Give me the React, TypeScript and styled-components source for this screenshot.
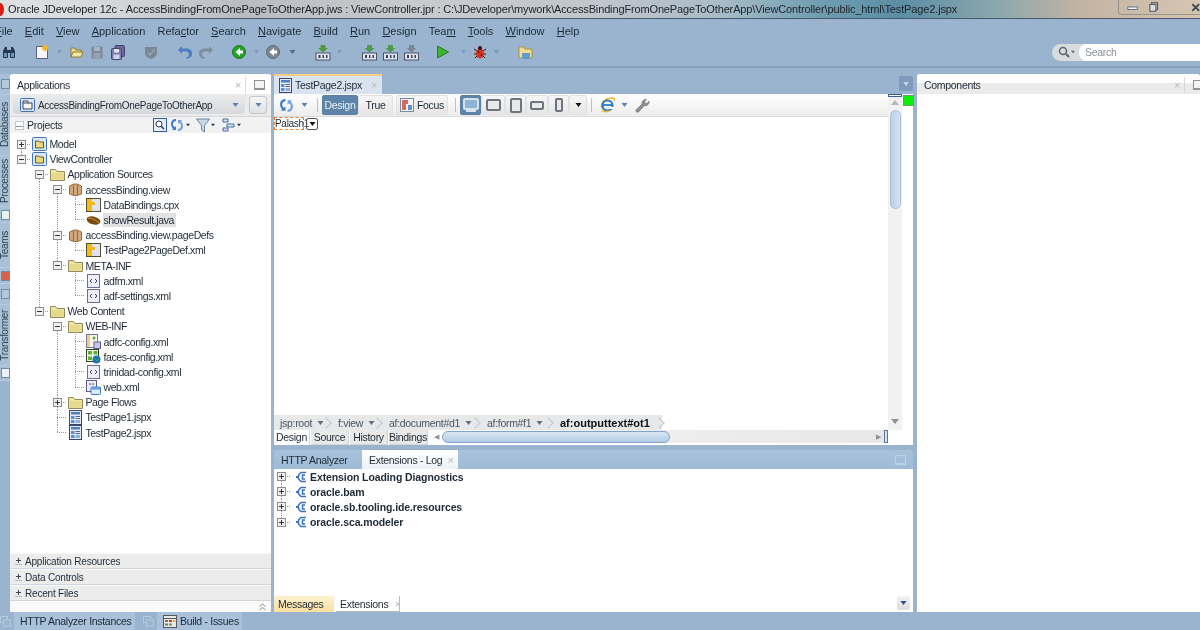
import React from 'react';
import styled, { createGlobalStyle } from 'styled-components';

const BLUE = '#9ab4cf';
const INK = '#1e2a36';

const Global = createGlobalStyle`
  html, body { margin: 0; padding: 0; background: ${BLUE}; }
  body { font-family: "Liberation Sans", Arial, sans-serif; font-size: 10.5px; letter-spacing: -0.3px; color: ${INK}; }
`;

/* ---------- icons ---------- */

const Caret = ({ c = '#5f82ab', w = 6 }: { c?: string; w?: number }) => (
  <svg width={w} height="4" viewBox="0 0 6 4" style={{ flex: 'none' }}><path d="M0 0h6L3 4z" fill={c} /></svg>
);

const Binoculars = () => (
  <svg width="14" height="14" viewBox="0 0 14 14">
    <path d="M1 6l2-4h2v3h4V2h2l2 4v6a1 1 0 0 1-1 1h-3a1 1 0 0 1-1-1V8H6v4a1 1 0 0 1-1 1H2a1 1 0 0 1-1-1z" fill="#26384f" />
    <rect x="2" y="8" width="3" height="4" fill="#6d93c0" /><rect x="9" y="8" width="3" height="4" fill="#6d93c0" />
  </svg>
);
const NewFile = () => (
  <svg width="15" height="16" viewBox="0 0 15 16">
    <path d="M1.500 2.500h8l3 3v9h-11z" fill="#f6f5fb" stroke="#5d5f88" />
    <path d="M10 0l1 2 2-1-1 2 2 1-2 1 1 2-2-1-1 2-1-2-2 1 1-2-2-1 2-1-1-2 2 1z" fill="#f2b62a" />
  </svg>
);
const OpenFolder = () => (
  <svg width="14" height="13" viewBox="0 0 14 13">
    <path d="M1 11V2h4l1 2h5v2" fill="#ecd98a" stroke="#8f7a32" />
    <path d="M1 11l2-5h10l-2 5z" fill="#f5e7a3" stroke="#8f7a32" />
  </svg>
);
const Floppy = ({ c = '#7c8a98', w = 12 }: { c?: string; w?: number }) => (
  <svg width={w} height="13" viewBox="0 0 12 13">
    <rect x=".5" y=".5" width="11" height="12" rx="1" fill={c} />
    <rect x="3" y="1" width="6" height="4" fill="#a9b5c0" /><rect x="2.500" y="7" width="7" height="5" fill="#95a2af" />
  </svg>
);
const SaveAll = () => (
  <svg width="14" height="15" viewBox="0 0 14 15">
    <rect x="4" y=".5" width="9.500" height="11" rx="1" fill="#6b6a9e" stroke="#44446e" />
    <rect x=".5" y="3.500" width="10" height="11" rx="1" fill="#7b7bb0" stroke="#44446e" />
    <rect x="3" y="4" width="5" height="3.500" fill="#e4e4f2" /><rect x="2.500" y="9.500" width="6" height="4.500" fill="#d3d3e8" />
  </svg>
);
const Shield = () => (
  <svg width="14" height="15" viewBox="0 0 14 15">
    <path d="M1 2h12v6c0 3-3 5-6 6-3-1-6-3-6-6z" fill="#7b8794" />
    <path d="M4 8l2 2 5-6" stroke="#98a3ae" strokeWidth="1.500" fill="none" />
  </svg>
);
const Undo = ({ c = '#4a7fc0', flip = false }: { c?: string; flip?: boolean }) => (
  <svg width="15" height="14" viewBox="0 0 15 14" style={flip ? { transform: 'scaleX(-1)' } : undefined}>
    <path d="M5 1L1 5l4 4V6.500h4c2 0 3 1.500 3 3s-1 2.500-3 3v1c4 0 6-2 6-5s-2-5-6-5H5z" fill={c} />
  </svg>
);
const Round = ({ c, d }: { c: string; d: string }) => (
  <svg width="14" height="14" viewBox="0 0 14 14">
    <circle cx="7" cy="7" r="6.500" fill={c} stroke={d} />
    <path d="M8 3v2.500h3v3H8V11L3.500 7z" fill="#fff" />
  </svg>
);
const Deploy = ({ c = '#4f9a3c', w = 15 }: { c?: string; w?: number }) => (
  <svg width={w} height="17" viewBox="0 0 15 17">
    <path d="M5 1h5v3h2.500L7.500 8.500 2.500 4H5z" fill={c} />
    <rect x=".5" y="9" width="14" height="7" fill="#dfe3f0" stroke="#4a5268" />
    <path d="M3 11h2v3H3zM7 11h1.500v3H7zM10.500 11H12v3h-1.500z" fill="#3b4257" />
  </svg>
);
const RunIcon = () => (
  <svg width="14" height="14" viewBox="0 0 14 14"><path d="M1.500 1l11 6-11 6z" fill="#3fb52e" stroke="#2b7a22" /></svg>
);
const Bug = () => (
  <svg width="12" height="14" viewBox="0 0 12 14">
    <path d="M0 4l3 2M12 4L9 6M0 9h3M12 9H9M1 13l2-2M11 13l-2-2" stroke="#3a1010" />
    <ellipse cx="6" cy="8.500" rx="4" ry="5" fill="#d5331f" /><circle cx="6" cy="3" r="2" fill="#3a1010" />
    <circle cx="4.500" cy="7" r=".8" fill="#20100c" /><circle cx="7.500" cy="10" r=".8" fill="#20100c" />
  </svg>
);
const BlueFolder = () => (
  <svg width="15" height="15" viewBox="0 0 15 15">
    <path d="M1 13V2h5l1 2h7v9z" fill="#efdc8e" stroke="#a99345" />
    <rect x="4" y="8" width="8" height="6" fill="#5d9bd0" />
  </svg>
);
const Magnifier = ({ c = '#5f6670' }: { c?: string }) => (
  <svg width="12" height="12" viewBox="0 0 12 12">
    <circle cx="5" cy="5" r="3.500" fill="none" stroke={c} strokeWidth="1.500" /><path d="M8 8l3 3" stroke={c} strokeWidth="2" />
  </svg>
);
const Refresh = ({ size = 14 }: { size?: number }) => (
  <svg width={size} height={size} viewBox="0 0 14 14">
    <path d="M6 1C3 1 1 3 1 6c0 2 1 3.500 2 4.500L2 12h4V8L4.500 9.200C3.500 8.400 3 7.300 3 6c0-1.500 1.300-3 3-3z" fill="#3e7cc4" />
    <path d="M8 13c3 0 5-2 5-5 0-2-1-3.500-2-4.500L12 2H8v4l1.500-1.200c1 .8 1.500 1.900 1.500 3.200 0 1.500-1.300 3-3 3z" fill="#6ea3dc" />
  </svg>
);
const Funnel = () => (
  <svg width="14" height="15" viewBox="0 0 14 15"><path d="M.5 1h13L8.500 7.500V14l-3-2V7.500z" fill="#c9d6e6" stroke="#6985a8" /></svg>
);
const Outline = () => (
  <svg width="13" height="14" viewBox="0 0 13 14">
    <path d="M1 1h5v3H1zM5 6h7v3H5zM1 10h5v3H1z" fill="#d5e2f1" stroke="#47709f" />
  </svg>
);
const FindBox = () => (
  <svg width="14" height="14" viewBox="0 0 14 14">
    <rect x=".5" y=".5" width="13" height="13" fill="#e7eef8" stroke="#2f5f9e" />
    <circle cx="6" cy="6" r="3" fill="#fff" stroke="#24385a" /><path d="M8 8l3 3" stroke="#24385a" strokeWidth="1.500" />
  </svg>
);
const AppIcon = () => (
  <svg width="15" height="14" viewBox="0 0 15 14" style={{ flex: 'none' }}>
    <rect x=".5" y=".5" width="14" height="13" rx="1" fill="#dbe6f6" stroke="#3d72bb" />
    <path d="M3 3h5v2h4v6H3zM3 5h5" fill="#f3f3f3" stroke="#40475a" />
  </svg>
);
const FocusIcon = () => (
  <svg width="14" height="14" viewBox="0 0 14 14">
    <rect x=".5" y=".5" width="13" height="13" fill="#f4f5f7" stroke="#7b8aa0" />
    <path d="M2 2h6v4H6v6H2z" fill="#d96b5b" /><rect x="8" y="7" width="4" height="5" fill="#5f91cc" />
  </svg>
);
const Ie = () => (
  <svg width="15" height="16" viewBox="0 0 15 16">
    <path d="M2 11C0 6 5 1 13 1c1 0 2 1 1 3" fill="none" stroke="#efb52c" strokeWidth="1.500" />
    <circle cx="7.500" cy="8.500" r="5" fill="none" stroke="#2a7dc4" strokeWidth="2.200" />
    <path d="M3 8h9" stroke="#2a7dc4" strokeWidth="1.800" />
    <path d="M2 13c1 2 4 2 7 1" fill="none" stroke="#efb52c" strokeWidth="1.500" />
    <rect x="10" y="10" width="4" height="2" fill="#fff" />
  </svg>
);
const Wrench = () => (
  <svg width="15" height="15" viewBox="0 0 15 15">
    <path d="M1 12l6-6c-.6-2.500 1.500-5 4.500-4.500L9.500 4l1 1.500 2-.5 1.500-2c.6 3-2 5.500-4.800 4.700L3.500 14a1.700 1.700 0 0 1-2.500-2z" fill="#8d8f92" stroke="#6f7174" strokeWidth=".6" />
  </svg>
);
const DoubleUp = () => (
  <svg width="7" height="8" viewBox="0 0 7 8"><path d="M.5 3.500L3.500 1l3 2.500M.5 7l3-2.500 3 2.500" fill="none" stroke="#8d8d8d" /></svg>
);

const Folder = () => (
  <svg width="15" height="13" viewBox="0 0 15 13">
    <path d="M.5 12.500v-11h5l1.500 2h7.500v9z" fill="#efe6a4" stroke="#8f8a58" />
    <path d="M1.500 5h12v6.500h-12z" fill="#e6d98c" />
  </svg>
);
const ProjectFolder = () => (
  <svg width="15" height="14" viewBox="0 0 15 14">
    <rect x=".5" y=".5" width="14" height="13" rx="1" fill="#dce8f8" stroke="#3f76c4" />
    <path d="M3.500 11V4h3l1 1h4v6z" fill="#e8d97e" stroke="#5d5a3a" />
  </svg>
);
const PackageIcon = () => (
  <svg width="13" height="13" viewBox="0 0 13 13">
    <path d="M.5 3L5 1h3l4.500 2v8L8 12.500H5L.5 11z" fill="#d2a77c" stroke="#96693f" />
    <path d="M4.500 2v10M8.500 2v10" stroke="#96693f" />
  </svg>
);
const Bindings = () => (
  <svg width="15" height="14" viewBox="0 0 15 14">
    <rect x=".5" y=".5" width="14" height="13" fill="#e0e2f3" stroke="#52502a" />
    <path d="M1 1h5v12H1z" fill="#f1bd14" /><path d="M6 4h3v3H6z" fill="#f1bd14" />
  </svg>
);
const Bean = () => (
  <svg width="15" height="11" viewBox="0 0 15 11">
    <ellipse cx="7.500" cy="5.500" rx="7" ry="4" transform="rotate(15 7.500 5.500)" fill="#7a4a12" />
    <path d="M2 3c4 0 8 2 11 5" stroke="#c99a45" fill="none" />
  </svg>
);
const XmlFile = () => (
  <svg width="13" height="14" viewBox="0 0 13 14">
    <rect x=".5" y=".5" width="12" height="13" fill="#eeeef8" stroke="#6a6c9c" />
    <path d="M5 5L3 7l2 2M8 5l2 2-2 2" stroke="#3a4268" fill="none" />
  </svg>
);
const AdfcFile = () => (
  <svg width="15" height="15" viewBox="0 0 15 15">
    <rect x=".5" y=".5" width="11" height="13" fill="#f8f6ea" stroke="#76789a" />
    <path d="M1 1h3v12H1z" fill="#f0cf83" /><circle cx="8" cy="4" r="1.500" fill="#5aa04a" />
    <rect x="8" y="8" width="6.500" height="6.500" fill="#c6c8e8" stroke="#5c5e90" />
  </svg>
);
const FacesFile = () => (
  <svg width="15" height="15" viewBox="0 0 15 15">
    <rect x=".5" y=".5" width="12" height="12" fill="#f4f7e8" stroke="#333f2a" />
    <rect x="2" y="2" width="4" height="3.500" fill="#5cb03a" /><rect x="7.500" y="2" width="4" height="3.500" fill="#5cb03a" /><rect x="2" y="7.500" width="4" height="3.500" fill="#5cb03a" />
    <circle cx="10.500" cy="10.500" r="4" fill="#1e73b8" /><path d="M8 9l3 3 2-2" stroke="#45a33a" fill="none" />
  </svg>
);
const WebFile = () => (
  <svg width="15" height="15" viewBox="0 0 15 15">
    <rect x=".5" y=".5" width="10" height="11" fill="#eeeef8" stroke="#5a5c8c" />
    <path d="M3 4h2M6 4h2" stroke="#3a4268" />
    <rect x="5" y="7" width="9.500" height="7.500" rx="1" fill="#dbeafa" stroke="#3d78c6" /><rect x="5.500" y="7.500" width="8.500" height="2" fill="#5c96dc" />
  </svg>
);
const PageFile = () => (
  <svg width="13" height="15" viewBox="0 0 13 15" style={{ flex: 'none' }}>
    <rect x=".5" y=".5" width="12" height="14" fill="#e5eaf6" stroke="#3d4672" />
    <rect x="2" y="2" width="9" height="2.500" fill="#4d7fc0" />
    <rect x="2" y="6" width="3.500" height="3" fill="#5c90d0" /><path d="M6.500 6.500H11M6.500 8.500H11" stroke="#5a6488" />
    <rect x="2" y="10" width="3.500" height="3" fill="#5c90d0" /><rect x="6.500" y="10" width="4.500" height="3" fill="#8fb2dc" />
  </svg>
);
const LibIcon = () => (
  <svg width="11" height="12" viewBox="0 0 11 12">
    <path d="M0 6h3" stroke="#3a73ba" strokeWidth="2" />
    <path d="M10 1.500H5L2.500 4v4L5 10.500h5M9 4H6.500v4H9" fill="none" stroke="#3a73ba" strokeWidth="1.500" />
  </svg>
);
const WinMin = () => <svg width="13" height="10" viewBox="0 0 13 10"><rect x="1" y="5" width="11" height="3" fill="#f4f4f4" stroke="#55606c" /></svg>;
const WinMax = () => (
  <svg width="11" height="12" viewBox="0 0 11 12">
    <rect x="3" y="1" width="7" height="8" fill="none" stroke="#4e5966" strokeWidth="1.200" />
    <rect x="1" y="3" width="7" height="8" fill="#dcdcdc" stroke="#4e5966" strokeWidth="1.200" />
  </svg>
);
const WinClose = () => <svg width="11" height="11" viewBox="0 0 11 11"><path d="M1.500 1.500l8 8M9.500 1.500l-8 8" stroke="#3f4750" strokeWidth="2.200" /></svg>;
const Stack = ({ c = '#bcd0e4' }: { c?: string }) => (
  <svg width="11" height="11" viewBox="0 0 11 11">
    <rect x=".5" y=".5" width="7" height="6" fill="none" stroke={c} />
    <rect x="3.500" y="4" width="7" height="6" fill={BLUE} stroke={c} />
  </svg>
);
const IssuesIcon = () => (
  <svg width="14" height="13" viewBox="0 0 14 13" style={{ flex: 'none' }}>
    <rect x=".5" y=".5" width="13" height="12" fill="#e8e8e4" stroke="#55585c" />
    <path d="M1 3.500h12" stroke="#55585c" /><rect x="2" y="5" width="3" height="2" fill="#777" /><rect x="6" y="5" width="3" height="2" fill="#d8372b" />
    <rect x="10" y="5" width="2.500" height="2" fill="#e8b52b" /><rect x="2" y="8.500" width="3" height="2" fill="#777" /><rect x="6" y="8.500" width="3" height="2" fill="#4ca83d" />
  </svg>
);

/* ---------- frame ---------- */

const Page = styled.div`
  width: 1200px;
  height: 630px;
  overflow: hidden;
  display: flex;
  flex-direction: column;
  background: ${BLUE};
  filter: blur(0.3px);
`;

const TitleBar = styled.header`
  height: 19px;
  flex: none;
  display: flex;
  align-items: center;
  box-sizing: border-box;
  border-bottom: 1px solid #46596b;
  background: linear-gradient(90deg, #dfe1e3 0, #d4d6d8 120px, #b9bcc1 240px, #c9cbce 420px, #c0c6cc 600px, #a9bcc8 720px, #6f9db0 820px, #5b8ea4 900px, #8ca8ad 1000px, #c3b3a3 1080px, #d5c5b2 1200px);
`;

const AppDot = styled.span`
  width: 7px;
  height: 13px;
  margin-left: -3px;
  margin-right: 4px;
  border-radius: 50%;
  background: #d81f16;
  flex: none;
`;

const TitleText = styled.span`
  font-size: 11px;
  letter-spacing: -0.14px;
  color: #20262c;
  white-space: nowrap;
  flex: 1;
`;

const WindowButtons = styled.div`
  width: 82px;
  height: 15px;
  flex: none;
  align-self: flex-start;
  display: flex;
  align-items: center;
  box-sizing: border-box;
  padding-left: 8px;
  gap: 11px;
  border: 1px solid #9a958c;
  border-top: none;
  border-right: none;
  border-radius: 0 0 0 3px;
`;

const CloseSpacer = styled.span`
  width: 10px;
  flex: none;
`;

const MenuBar = styled.nav`
  height: 22px;
  flex: none;
  display: flex;
  align-items: center;
  gap: 12.2px;
  padding-top: 1px;
  box-sizing: border-box;
  margin-left: -5px;
  font-size: 11px;
  letter-spacing: -0.02px;
`;

const MenuKey = styled.span`
  text-decoration: underline;
  text-underline-offset: 1px;
`;

const ToolBar = styled.div`
  height: 27px;
  flex: none;
  display: flex;
  align-items: center;
  box-sizing: border-box;
  padding: 0 0 3px 0;
  border-bottom: 2px solid #84a0bd;
`;

const Tool = styled.span<{ $ml: number }>`
  margin-left: ${p => p.$ml}px;
  display: inline-flex;
  flex: none;
`;

const SearchBox = styled.div`
  margin-left: auto;
  width: 148px;
  height: 17px;
  display: flex;
  align-items: center;
  border-radius: 9px 0 0 9px;
  background: #d9dcdf;
  padding-left: 6px;
  gap: 1px;
  box-sizing: border-box;
`;

const SearchField = styled.span`
  flex: 1;
  height: 17px;
  margin-left: 3px;
  padding-left: 6px;
  line-height: 17px;
  box-sizing: border-box;
  border-radius: 8px 0 0 8px;
  background: #fff;
  color: #8a8f95;
`;

const Workspace = styled.main`
  flex: 1;
  min-height: 0;
  display: flex;
  padding-top: 6px;
`;

/* ---------- left rail ---------- */

const Rail = styled.aside`
  width: 10px;
  flex: none;
  display: flex;
  flex-direction: column;
  overflow: hidden;
`;

const RailItem = styled.div<{ $h: number }>`
  height: ${p => p.$h}px;
  flex: none;
  display: flex;
  justify-content: flex-end;
  align-items: center;
  background: #a8bfd8;
  border-bottom: 1px solid #b7cade;
`;

const RailText = styled.span`
  writing-mode: vertical-rl;
  transform: rotate(180deg);
  white-space: nowrap;
  font-size: 10px;
  line-height: 10px;
  color: #34444f;
`;

const RailMark = styled.span<{ $c: string }>`
  width: 7px;
  height: 8px;
  flex: none;
  background: ${p => p.$c};
  border: 1px solid #6f8cab;
`;

/* ---------- left panel ---------- */

const LeftPanel = styled.section`
  width: 261px;
  flex: none;
  display: flex;
  flex-direction: column;
  background: #fff;
  border-radius: 3px 3px 0 0;
`;

const PanelHead = styled.div`
  height: 20px;
  flex: none;
  display: flex;
  align-items: center;
  padding-left: 7px;
  padding-top: 1px;
  box-sizing: border-box;
  border-radius: 3px 3px 0 0;
  background: #fff;
`;

const CloseMark = styled.span<{ $ml?: string }>`
  margin-left: ${p => p.$ml ?? 'auto'};
  color: #b5b8bb;
  font-size: 11px;
`;

const HeadDivider = styled.span`
  width: 1px;
  height: 16px;
  margin: 0 8px 0 4px;
  background: #d9d9d9;
`;

const MinButton = styled.span<{ $mr?: number }>`
  width: 9px;
  height: 7px;
  margin-right: ${p => p.$mr ?? 6}px;
  border: 1px solid #8f9398;
  border-bottom-width: 2px;
  background: #f4f4f4;
  flex: none;
`;

const SelectorRow = styled.div`
  height: 23px;
  flex: none;
  display: flex;
  align-items: center;
  gap: 4px;
  padding: 0 4px 0 3px;
  box-sizing: border-box;
  background: #ebebeb;
  border-bottom: 1px solid #d4d8dc;
`;

const Selector = styled.div`
  width: 232px;
  height: 18px;
  flex: none;
  display: flex;
  align-items: center;
  gap: 3px;
  box-sizing: border-box;
  padding: 0 6px 0 7px;
  border-radius: 4px;
  background: linear-gradient(#e9eaec, #d6d9dd);
  font-size: 10px;
  white-space: nowrap;
`;

const SelectorCaret = styled.span`
  margin-left: auto;
  display: flex;
`;

const SelectorArrow = styled.span`
  width: 18px;
  height: 18px;
  flex: none;
  display: flex;
  align-items: center;
  justify-content: center;
  box-sizing: border-box;
  border-radius: 3px;
  border: 1px solid #c3c6ca;
  background: linear-gradient(#f5f5f5, #dfe1e4);
`;

const ProjectsRow = styled.div`
  height: 16px;
  flex: none;
  display: flex;
  align-items: center;
  box-sizing: border-box;
  padding-left: 5px;
  background: #f2f2f2;
`;

const Collapse = styled.span`
  width: 7px;
  height: 7px;
  margin-right: 3px;
  background: linear-gradient(#fff 4px, #8d95a0 4px, #8d95a0 5px, #fff 5px);
  border: 1px solid #c2c5c9;
`;

const Tree = styled.ul`
  flex: 1;
  min-height: 0;
  list-style: none;
  margin: 0;
  padding: 3.500px 0 0 2px;
  letter-spacing: -0.4px;
`;

type CellKind = ' ' | '|' | 'T' | 'L' | '+d' | '-d' | '-u' | '-b' | '+b' | '+u';

const dots = 'repeating-linear-gradient(#9a9a9a 0 1px, transparent 1px 2px)';
const hdots = 'repeating-linear-gradient(90deg, #9a9a9a 0 1px, transparent 1px 2px)';

const cellBackground = (kind: CellKind) => {
  const v = (top: string, h: string) => `${dots} 8.500px ${top} / 1px ${h} no-repeat`;
  const h = (left: string, w: string) => `${hdots} ${left} 7px / ${w} 1px no-repeat`;
  switch (kind) {
    case '|': return v('0', '100%');
    case 'T': return `${v('0', '100%')}, ${h('9px', '9px')}`;
    case 'L': return `${v('0', '8px')}, ${h('9px', '9px')}`;
    case '+d': case '-d': return `${v('8px', '8px')}, ${h('13px', '5px')}`;
    case '-u': case '+u': return `${v('0', '8px')}, ${h('13px', '5px')}`;
    default: return `${v('0', '100%')}, ${h('13px', '5px')}`;
  }
};

const TreeRow = styled.li`
  height: 15.2px;
  display: flex;
  align-items: center;
  white-space: nowrap;
`;

const TreeCell = styled.span<{ $kind: CellKind }>`
  width: 18px;
  height: 100%;
  flex: none;
  display: flex;
  align-items: center;
  justify-content: center;
  background: ${p => (p.$kind === ' ' ? 'none' : cellBackground(p.$kind))};
`;

const Expander = styled.span<{ $open: boolean }>`
  width: 7px;
  height: 7px;
  box-sizing: content-box;
  border: 1px solid #8e8e8e;
  background:
    linear-gradient(#333, #333) center / 5px 1px no-repeat,
    ${p => (p.$open ? 'none' : 'linear-gradient(#333, #333) center / 1px 5px no-repeat')},
    #f1f1f1;
`;

const TreeIcon = styled.span`
  width: 15px;
  margin: 0 2.500px 0 2px;
  flex: none;
  display: flex;
  justify-content: center;
`;

const TreeLabel = styled.span<{ $hl?: boolean }>`
  background: ${p => (p.$hl ? '#e2e2e2' : 'transparent')};
  padding: 1px 0;
  box-shadow: ${p => (p.$hl ? '2px 0 #e2e2e2, -1px 0 #e2e2e2' : 'none')};
`;

const Accordion = styled.div`
  height: 16px;
  flex: none;
  display: flex;
  align-items: center;
  padding-left: 5px;
  box-sizing: border-box;
  font-size: 10px;
  letter-spacing: -0.2px;
  background: #ececec;
  border-bottom: 1px solid #cfd6de;
  border-top: 1px solid #f8f8f8;
`;

const PlusBox = styled.span`
  width: 7px;
  height: 7px;
  margin-right: 3px;
  background:
    linear-gradient(#445, #445) center / 5px 1px no-repeat,
    linear-gradient(#445, #445) center / 1px 5px no-repeat;
  border-bottom: 1px solid #b5bcc5;
`;

const PanelFoot = styled.div`
  height: 11px;
  flex: none;
  display: flex;
  justify-content: flex-end;
  align-items: center;
  padding-right: 5px;
  background: #fafafa;
`;

/* ---------- centre ---------- */

const Centre = styled.section`
  width: 639px;
  flex: none;
  margin-left: 3px;
  display: flex;
  flex-direction: column;
`;

const EditorTabs = styled.div`
  height: 20px;
  flex: none;
  display: flex;
  align-items: flex-start;
  justify-content: space-between;
`;

const EditorTab = styled.div`
  width: 108px;
  height: 20px;
  display: flex;
  align-items: center;
  gap: 3px;
  box-sizing: border-box;
  padding: 0 0 0 5px;
  white-space: nowrap;
  border-top: 2px solid #f6cf84;
  background: #d8e3ef;
`;

const OverflowButton = styled.span`
  width: 14px;
  height: 15px;
  margin-top: 2px;
  display: flex;
  align-items: center;
  justify-content: center;
  border-radius: 2px;
  background: #7f9abb;
`;

const EditorBar = styled.div`
  height: 23px;
  flex: none;
  display: flex;
  align-items: center;
  box-sizing: border-box;
  border-bottom: 1px solid #dcdcdc;
  background: linear-gradient(#fff, #ececec);
`;

const BarSep = styled.span<{ $ml: number }>`
  width: 1px;
  height: 14px;
  margin-left: ${p => p.$ml}px;
  background: #bcc0c5;
  flex: none;
`;

const BarButton = styled.span<{ $on?: boolean; $w: number; $ml?: number }>`
  width: ${p => p.$w}px;
  height: 20px;
  margin-left: ${p => p.$ml ?? 0}px;
  flex: none;
  display: flex;
  align-items: center;
  justify-content: center;
  gap: 3px;
  box-sizing: border-box;
  border: 1px solid ${p => (p.$on ? '#5c7fa3' : '#dfe1e3')};
  border-radius: 2px;
  color: ${p => (p.$on ? '#e8f0f8' : INK)};
  background: ${p => (p.$on ? '#5f84a9' : 'linear-gradient(#f6f6f6, #e6e6e6)')};
`;

const Device = styled.span<{ $w: number; $h: number; $c?: string; $r?: number }>`
  width: ${p => p.$w}px;
  height: ${p => p.$h}px;
  box-sizing: border-box;
  border: 2px solid ${p => p.$c ?? '#6d747c'};
  border-radius: ${p => p.$r ?? 2}px;
  background: ${p => (p.$c ? '#8fb3d6' : '#e6e8ea')};
`;

const DesktopStand = styled.span`
  display: flex;
  flex-direction: column;
  align-items: center;
  &::after {
    content: '';
    width: 10px;
    height: 2px;
    background: #d6e3ef;
  }
`;

const DesignArea = styled.div`
  flex: 1;
  min-height: 0;
  display: grid;
  grid-template-columns: 614px 14px 11px;
  background: #fff;
`;

const Canvas = styled.div`
  min-width: 0;
  display: flex;
  flex-direction: column;
`;

const CanvasBody = styled.div`
  flex: 1;
  min-height: 0;
  display: flex;
  align-items: flex-start;
`;

const OutputText = styled.span`
  width: 30px;
  height: 13px;
  flex: none;
  line-height: 12px;
  box-sizing: border-box;
  font-size: 10px;
  border: 1px dashed #f07a2a;
`;

const SelectArrow = styled.span`
  width: 12px;
  height: 12px;
  margin: 1px 0 0 2px;
  display: flex;
  align-items: center;
  justify-content: center;
  box-sizing: border-box;
  border: 1px solid #555;
  border-radius: 2px;
`;

const Crumbs = styled.div`
  height: 15px;
  flex: none;
  display: flex;
  align-items: center;
  background: linear-gradient(90deg, #e6e8ea 0 388px, transparent 388px);
`;

const Crumb = styled.span<{ $w: number; $bold?: boolean }>`
  width: ${p => p.$w}px;
  flex: none;
  display: flex;
  align-items: center;
  gap: 5px;
  padding-left: 6px;
  box-sizing: border-box;
  white-space: nowrap;
  color: ${p => (p.$bold ? '#111' : '#4a5560')};
  font-weight: ${p => (p.$bold ? 700 : 400)};
  font-size: ${p => (p.$bold ? 11 : 10.5)}px;
  letter-spacing: ${p => (p.$bold ? 0 : -0.3)}px;
  &::after {
    content: '';
    width: 8px;
    height: 8px;
    flex: none;
    margin-left: auto;
    margin-right: 2px;
    box-sizing: border-box;
    border-top: 1px solid #c3c8ce;
    border-right: 1px solid #c3c8ce;
    transform: rotate(45deg);
  }
`;

const CrumbCaret = styled.span`
  display: flex;
  margin-right: -10px;
`;

const ViewTabs = styled.div`
  height: 15px;
  flex: none;
  display: flex;
  align-items: stretch;
`;

const ViewTab = styled.span<{ $on?: boolean; $w: number }>`
  width: ${p => p.$w}px;
  flex: none;
  text-align: center;
  line-height: 15px;
  margin-right: 1px;
  background: ${p => (p.$on ? '#fff' : '#e9e9e9')};
  border-right: 1px solid #d2d2d2;
  border-bottom: ${p => (p.$on ? 'none' : '1px solid #d6d6d6')};
  box-sizing: border-box;
`;

const HScroll = styled.div`
  flex: 1;
  min-width: 0;
  display: flex;
  align-items: center;
  padding-left: 5px;
  height: 13px;
  color: #8d9298;
  font-size: 7px;
  background: linear-gradient(90deg, #fff, #ececec 60%, #e8e8e8);
`;

const HThumb = styled.span`
  width: 228px;
  height: 12px;
  margin-left: 3px;
  box-sizing: border-box;
  border: 1px solid #7ea4cc;
  border-radius: 6px;
  background: linear-gradient(#d9e6f3, #b3cbe3);
`;

const HRightArrow = styled.span`
  margin-left: auto;
  margin-right: 3px;
`;

const HEnd = styled.span`
  width: 4px;
  height: 13px;
  box-sizing: border-box;
  border: 1px solid #4d78a8;
  background: #dde;
`;

const VScroll = styled.div`
  height: 336px;
  display: flex;
  flex-direction: column;
  align-items: center;
  background: #f1f1f1;
`;

const VCap = styled.span`
  width: 14px;
  height: 3px;
  box-sizing: border-box;
  border: 1px solid #345f93;
  background: #fff;
  flex: none;
`;

const VThumb = styled.span`
  width: 11px;
  height: 99px;
  margin-top: 5px;
  flex: none;
  box-sizing: border-box;
  border-radius: 6px;
  border: 1px solid #a6c0da;
  background: linear-gradient(90deg, #bcd1e6, #d5e2ef);
`;

const ScrollArrow = styled.span<{ $up?: boolean }>`
  width: 0;
  height: 0;
  flex: none;
  border-left: 4px solid transparent;
  border-right: 4px solid transparent;
  ${p => (p.$up ? 'border-bottom: 5px solid #b4b7ba; margin-top: 3px;' : 'border-top: 5px solid #8f9194; margin-top: auto; margin-bottom: 6px;')}
`;

const Marks = styled.div`
  padding: 1px 1px 0;
  background: #fff;
`;

const GreenMark = styled.span`
  display: block;
  width: 9px;
  height: 9px;
  background: #0af00a;
  border: 0.500px solid #6c9c6c;
`;

const LogPanel = styled.div`
  flex: none;
  height: 162px;
  margin-top: 5px;
  display: flex;
  flex-direction: column;
`;

const LogTabs = styled.div`
  height: 19px;
  flex: none;
  display: flex;
  align-items: center;
  background: linear-gradient(#aac3dc, #9fbad6);
  border-radius: 3px 3px 0 0;
`;

const LogTab = styled.span<{ $on?: boolean; $w: number }>`
  width: ${p => p.$w}px;
  height: 19px;
  flex: none;
  display: flex;
  align-items: center;
  gap: 5px;
  padding-left: 7px;
  box-sizing: border-box;
  white-space: nowrap;
  background: ${p => (p.$on ? 'linear-gradient(#fff, #edf2f7)' : 'none')};
`;

const LogMin = styled.span`
  width: 9px;
  height: 7px;
  margin-left: auto;
  margin-right: 7px;
  border: 1px solid #bed0e3;
  border-bottom-width: 2px;
`;

const LogBody = styled.div`
  flex: 1;
  min-height: 0;
  background: #fff;
  display: flex;
  flex-direction: column;
`;

const LogTree = styled.ul`
  flex: 1;
  min-height: 0;
  list-style: none;
  margin: 0;
  padding: 0;
`;

const LogRow = styled(TreeRow)`
  font-size: 10.5px;
  font-weight: 700;
  letter-spacing: -0.1px;
`;

const LogCell = styled(TreeCell)`
  margin-left: -2px;
`;

const LogTreeIcon = styled.span`
  width: 11px;
  margin: 0 3px 0 6px;
  flex: none;
  display: flex;
`;

const LogBottom = styled.div`
  height: 16px;
  flex: none;
  display: flex;
  align-items: stretch;
`;

const BottomTab = styled.span<{ $on?: boolean; $w: number }>`
  width: ${p => p.$w}px;
  flex: none;
  display: flex;
  align-items: center;
  gap: 6px;
  padding-left: 4px;
  margin-right: 2px;
  box-sizing: border-box;
  border-right: ${p => (p.$on ? 'none' : '1px solid #b9b9b9')};
  border-bottom: ${p => (p.$on ? 'none' : '1px solid #b9b9b9')};
  background: ${p => (p.$on ? 'linear-gradient(#fdf1cf, #fbdf9f)' : '#fff')};
`;

const CornerButton = styled.span`
  width: 13px;
  height: 14px;
  margin-left: auto;
  margin-right: 3px;
  border-radius: 2px;
  display: flex;
  align-items: center;
  justify-content: center;
  background: linear-gradient(#f2f2f2, #dcdcdc);
`;

/* ---------- right panel ---------- */

const RightPanel = styled.section`
  flex: 1;
  min-width: 0;
  margin-left: 4px;
  background: #fff;
  border-radius: 3px 3px 0 0;
`;

const RightHead = styled(PanelHead)`
  background: linear-gradient(#fff 9px, #ebebeb 9px);
`;

/* ---------- status bar ---------- */

const StatusBar = styled.footer`
  height: 18px;
  flex: none;
  display: flex;
  align-items: center;
`;

const StatusIcon = styled.span<{ $ml: number }>`
  margin-left: ${p => p.$ml}px;
  width: 18px;
  flex: none;
  display: flex;
  justify-content: center;
  opacity: 0.8;
`;

const StatusItem = styled.span<{ $w: number }>`
  width: ${p => p.$w}px;
  height: 18px;
  flex: none;
  display: flex;
  align-items: center;
  gap: 3px;
  padding-left: 6px;
  box-sizing: border-box;
  white-space: nowrap;
  background: #a9c1da;
`;

/* ---------- data ---------- */

const menus: [string, string, string][] = [
  ['', 'F', 'ile'], ['', 'E', 'dit'], ['', 'V', 'iew'], ['', 'A', 'pplication'],
  ['Refa', 'c', 'tor'], ['', 'S', 'earch'], ['', 'N', 'avigate'], ['', 'B', 'uild'],
  ['', 'R', 'un'], ['', 'D', 'esign'], ['Tea', 'm', ''], ['', 'T', 'ools'],
  ['', 'W', 'indow'], ['', 'H', 'elp'],
];

type Row = { cells: CellKind[]; icon: React.ReactNode; label: string; hl?: boolean };

const rows: Row[] = [
  { cells: ['+d'], icon: <ProjectFolder />, label: 'Model' },
  { cells: ['-u'], icon: <ProjectFolder />, label: 'ViewController' },
  { cells: [' ', '-d'], icon: <Folder />, label: 'Application Sources' },
  { cells: [' ', '|', '-d'], icon: <PackageIcon />, label: 'accessBinding.view' },
  { cells: [' ', '|', '|', 'T'], icon: <Bindings />, label: 'DataBindings.cpx' },
  { cells: [' ', '|', '|', 'L'], icon: <Bean />, label: 'showResult.java', hl: true },
  { cells: [' ', '|', '-b'], icon: <PackageIcon />, label: 'accessBinding.view.pageDefs' },
  { cells: [' ', '|', '|', 'L'], icon: <Bindings />, label: 'TestPage2PageDef.xml' },
  { cells: [' ', '|', '-u'], icon: <Folder />, label: 'META-INF' },
  { cells: [' ', '|', ' ', 'T'], icon: <XmlFile />, label: 'adfm.xml' },
  { cells: [' ', '|', ' ', 'L'], icon: <XmlFile />, label: 'adf-settings.xml' },
  { cells: [' ', '-u'], icon: <Folder />, label: 'Web Content' },
  { cells: [' ', ' ', '-d'], icon: <Folder />, label: 'WEB-INF' },
  { cells: [' ', ' ', '|', 'T'], icon: <AdfcFile />, label: 'adfc-config.xml' },
  { cells: [' ', ' ', '|', 'T'], icon: <FacesFile />, label: 'faces-config.xml' },
  { cells: [' ', ' ', '|', 'T'], icon: <XmlFile />, label: 'trinidad-config.xml' },
  { cells: [' ', ' ', '|', 'L'], icon: <WebFile />, label: 'web.xml' },
  { cells: [' ', ' ', '+b'], icon: <Folder />, label: 'Page Flows' },
  { cells: [' ', ' ', 'T'], icon: <PageFile />, label: 'TestPage1.jspx' },
  { cells: [' ', ' ', 'L'], icon: <PageFile />, label: 'TestPage2.jspx' },
];

const crumbs: [string, number][] = [
  ['jsp:root', 58], ['f:view', 51], ['af:document#d1', 98], ['af:form#f1', 73],
];

const logRows: [string, CellKind][] = [
  ['Extension Loading Diagnostics', '+d'],
  ['oracle.bam', '+b'],
  ['oracle.sb.tooling.ide.resources', '+b'],
  ['oracle.sca.modeler', '+u'],
];

const hasExpander = (k: CellKind) => k[0] === '+' || k[0] === '-';

export default function App() {
  return (
    <Page>
      <Global />
      <TitleBar>
        <AppDot />
        <TitleText>
          Oracle JDeveloper 12c - AccessBindingFromOnePageToOtherApp.jws : ViewController.jpr : C:\JDeveloper\mywork\AccessBindingFromOnePageToOtherApp\ViewController\public_html\TestPage2.jspx
        </TitleText>
        <WindowButtons>
          <WinMin /><WinMax /><CloseSpacer /><WinClose />
        </WindowButtons>
      </TitleBar>

      <MenuBar>
        {menus.map(([a, k, b]) => (
          <span key={a + k + b}>{a}<MenuKey>{k}</MenuKey>{b}</span>
        ))}
      </MenuBar>

      <ToolBar>
        <Tool $ml={2}><Binoculars /></Tool>
        <Tool $ml={19}><NewFile /></Tool>
        <Tool $ml={7}><Caret c="#7c97b8" w={5} /></Tool>
        <Tool $ml={8}><OpenFolder /></Tool>
        <Tool $ml={7}><Floppy /></Tool>
        <Tool $ml={8}><SaveAll /></Tool>
        <Tool $ml={19}><Shield /></Tool>
        <Tool $ml={19}><Undo /></Tool>
        <Tool $ml={7}><Undo c="#7f8c99" flip /></Tool>
        <Tool $ml={18}><Round c="#25a32b" d="#167a1c" /></Tool>
        <Tool $ml={8}><Caret c="#7c97b8" w={5} /></Tool>
        <Tool $ml={7}><Round c="#7d8791" d="#5f6870" /></Tool>
        <Tool $ml={9}><Caret c="#5a6a7c" w={7} /></Tool>
        <Tool $ml={19}><Deploy w={16} /></Tool>
        <Tool $ml={6}><Caret c="#7c97b8" w={5} /></Tool>
        <Tool $ml={20}><Deploy c="#4c9a4c" /></Tool>
        <Tool $ml={6}><Deploy c="#4c9a4c" /></Tool>
        <Tool $ml={6}><Deploy c="#7b8792" /></Tool>
        <Tool $ml={17}><RunIcon /></Tool>
        <Tool $ml={11}><Caret c="#7c97b8" w={5} /></Tool>
        <Tool $ml={8}><Bug /></Tool>
        <Tool $ml={7}><Caret c="#7c97b8" w={7} /></Tool>
        <Tool $ml={18}><BlueFolder /></Tool>
        <SearchBox>
          <Magnifier /><Caret c="#5f6670" w={4} />
          <SearchField>Search</SearchField>
        </SearchBox>
      </ToolBar>

      <Workspace>
        <Rail>
          <RailItem $h={20}><RailMark $c="#b5c9dd" /></RailItem>
          <RailItem $h={60}><RailText>Databases</RailText></RailItem>
          <RailItem $h={50}><RailText>Processes</RailText></RailItem>
          <RailItem $h={15}><RailMark $c="#e8f2e8" /></RailItem>
          <RailItem $h={44}><RailText>Teams</RailText></RailItem>
          <RailItem $h={15}><RailMark $c="#d9604a" /></RailItem>
          <RailItem $h={20}><RailMark $c="#b5c9dd" /></RailItem>
          <RailItem $h={60}><RailText>Transformer</RailText></RailItem>
          <RailItem $h={14}><RailMark $c="#eef2f8" /></RailItem>
        </Rail>

        <LeftPanel>
          <PanelHead>
            Applications
            <CloseMark>×</CloseMark>
            <HeadDivider />
            <MinButton />
          </PanelHead>
          <SelectorRow>
            <Selector>
              <AppIcon />
              AccessBindingFromOnePageToOtherApp
              <SelectorCaret><Caret c="#5f82ab" w={7} /></SelectorCaret>
            </Selector>
            <SelectorArrow><Caret c="#5f82ab" w={7} /></SelectorArrow>
          </SelectorRow>
          <ProjectsRow>
            <Collapse />
            Projects
            <Tool $ml={90}><FindBox /></Tool>
            <Tool $ml={3}><Refresh /></Tool>
            <Tool $ml={2}><Caret c="#26384f" w={4} /></Tool>
            <Tool $ml={6}><Funnel /></Tool>
            <Tool $ml={1}><Caret c="#26384f" w={4} /></Tool>
            <Tool $ml={7}><Outline /></Tool>
            <Tool $ml={2}><Caret c="#26384f" w={4} /></Tool>
          </ProjectsRow>
          <Tree>
            {rows.map(r => (
              <TreeRow key={r.label}>
                {r.cells.map((k, i) => (
                  <TreeCell key={i} $kind={k}>
                    {hasExpander(k) && <Expander $open={k[0] === '-'} />}
                  </TreeCell>
                ))}
                <TreeIcon>{r.icon}</TreeIcon>
                <TreeLabel $hl={r.hl}>{r.label}</TreeLabel>
              </TreeRow>
            ))}
          </Tree>
          <Accordion><PlusBox />Application Resources</Accordion>
          <Accordion><PlusBox />Data Controls</Accordion>
          <Accordion><PlusBox />Recent Files</Accordion>
          <PanelFoot><DoubleUp /></PanelFoot>
        </LeftPanel>

        <Centre>
          <EditorTabs>
            <EditorTab>
              <PageFile />
              TestPage2.jspx
              <CloseMark $ml="6px">×</CloseMark>
            </EditorTab>
            <OverflowButton><Caret c="#c5d3e3" w={8} /></OverflowButton>
          </EditorTabs>

          <DesignArea>
            <Canvas>
              <EditorBar>
                <Tool $ml={5}><Refresh size={15} /></Tool>
                <Tool $ml={7}><Caret c="#5f82ab" w={7} /></Tool>
                <BarSep $ml={9} />
                <BarButton $on $w={36} $ml={4}>Design</BarButton>
                <BarButton $w={35}>True</BarButton>
                <BarButton $w={52} $ml={3}><FocusIcon />Focus</BarButton>
                <BarSep $ml={7} />
                <BarButton $on $w={21} $ml={4}>
                  <DesktopStand><Device $w={16} $h={12} $c="#d6e3ef" /></DesktopStand>
                </BarButton>
                <BarButton $w={24}><Device $w={15} $h={12} /></BarButton>
                <BarButton $w={21}><Device $w={12} $h={15} /></BarButton>
                <BarButton $w={22}><Device $w={14} $h={9} /></BarButton>
                <BarButton $w={21}><Device $w={8} $h={14} /></BarButton>
                <BarButton $w={18}><Caret c="#111" w={7} /></BarButton>
                <BarSep $ml={4} />
                <Tool $ml={8}><Ie /></Tool>
                <Tool $ml={6}><Caret c="#5f82ab" w={7} /></Tool>
                <Tool $ml={7}><Wrench /></Tool>
              </EditorBar>
              <CanvasBody>
                <OutputText>Palash1</OutputText>
                <SelectArrow><Caret c="#111" w={7} /></SelectArrow>
              </CanvasBody>
              <Crumbs>
                {crumbs.map(([t, w]) => (
                  <Crumb key={t} $w={w}>{t}<CrumbCaret><Caret c="#5f6f80" w={7} /></CrumbCaret></Crumb>
                ))}
                <Crumb $w={108} $bold>af:outputtext#ot1</Crumb>
              </Crumbs>
              <ViewTabs>
                <ViewTab $on $w={36}>Design</ViewTab>
                <ViewTab $w={38}>Source</ViewTab>
                <ViewTab $w={38}>History</ViewTab>
                <ViewTab $w={39}>Bindings</ViewTab>
                <HScroll>
                  ◀<HThumb /><HRightArrow>▶</HRightArrow><HEnd />
                </HScroll>
              </ViewTabs>
            </Canvas>
            <VScroll>
              <VCap />
              <ScrollArrow $up />
              <VThumb />
              <ScrollArrow />
            </VScroll>
            <Marks><GreenMark /></Marks>
          </DesignArea>

          <LogPanel>
            <LogTabs>
              <LogTab $w={88}>HTTP Analyzer</LogTab>
              <LogTab $on $w={96}>Extensions - Log<CloseMark $ml="0">×</CloseMark></LogTab>
              <LogMin />
            </LogTabs>
            <LogBody>
              <LogTree>
                {logRows.map(([t, k]) => (
                  <LogRow key={t}>
                    <LogCell $kind={k}><Expander $open={false} /></LogCell>
                    <LogTreeIcon><LibIcon /></LogTreeIcon>
                    {t}
                  </LogRow>
                ))}
              </LogTree>
              <LogBottom>
                <BottomTab $on $w={60}>Messages</BottomTab>
                <BottomTab $w={64}>Extensions<CloseMark $ml="0">×</CloseMark></BottomTab>
                <CornerButton><Caret c="#24508e" w={7} /></CornerButton>
              </LogBottom>
            </LogBody>
          </LogPanel>
        </Centre>

        <RightPanel>
          <RightHead>
            Components
            <CloseMark>×</CloseMark>
            <HeadDivider />
            <MinButton $mr={-4} />
          </RightHead>
        </RightPanel>
      </Workspace>

      <StatusBar>
        <StatusIcon $ml={-4}><Stack /></StatusIcon>
        <StatusItem $w={121}>HTTP Analyzer Instances</StatusItem>
        <StatusIcon $ml={4}><Stack /></StatusIcon>
        <StatusItem $w={85}><IssuesIcon />Build - Issues</StatusItem>
      </StatusBar>
    </Page>
  );
}
